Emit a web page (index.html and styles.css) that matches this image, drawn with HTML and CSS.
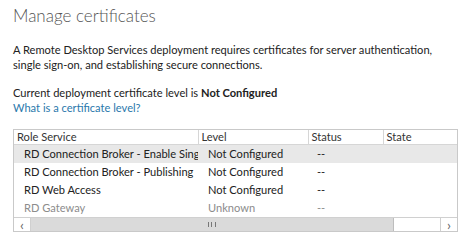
FILE: index.html
```html
<!DOCTYPE html>
<html lang="en">
<head>
    <meta charset="UTF-8">
    <title>Manage certificates</title>
    <link rel="stylesheet" href="styles.css">
</head>
<body>
    <div class="page">
        <h1>Manage certificates</h1>
        <p class="intro">A Remote Desktop Services deployment requires certificates for server authentication,<br>
            single sign-on, and establishing secure connections.</p>
        <p class="level">Current deployment certificate level is <b>Not Configured</b><br>
            <a href="#">What is a certificate level?</a></p>

        <div class="grid">
            <table>
                <colgroup>
                    <col class="c-role">
                    <col class="c-level">
                    <col class="c-status">
                    <col>
                </colgroup>
                <thead>
                    <tr>
                        <th>Role Service</th>
                        <th>Level</th>
                        <th>Status</th>
                        <th>State</th>
                    </tr>
                </thead>
                <tbody>
                    <tr class="selected">
                        <td class="role">RD Connection Broker - Enable Single Sign On</td>
                        <td>Not Configured</td>
                        <td class="dash">--</td>
                        <td></td>
                    </tr>
                    <tr>
                        <td class="role">RD Connection Broker - Publishing</td>
                        <td>Not Configured</td>
                        <td class="dash">--</td>
                        <td></td>
                    </tr>
                    <tr>
                        <td class="role">RD Web Access</td>
                        <td>Not Configured</td>
                        <td class="dash">--</td>
                        <td></td>
                    </tr>
                    <tr class="disabled">
                        <td class="role">RD Gateway</td>
                        <td>Unknown</td>
                        <td class="dash">--</td>
                        <td></td>
                    </tr>
                </tbody>
            </table>
            <div class="hscroll">
                <span class="arrow">&lsaquo;</span>
                <span class="thumb"><span class="grip"></span></span>
                <span class="track"></span>
                <span class="arrow">&rsaquo;</span>
            </div>
        </div>
    </div>
</body>
</html>
```

FILE: styles.css
```css
body {
    margin: 0;
    background-color: #fff;
    font-family: Lato, "Open Sans", sans-serif;
    font-size: 11.1px;
    color: #222;
}
.page {
    padding: 3px 16px 0 13px;
}
h1 {
    margin: 0;
    font-size: 17px;
    font-weight: 300;
    color: #555;
    line-height: 26px;
}
.intro {
    margin: 13px 0 0;
    line-height: 15px;
    white-space: nowrap;
}
.level {
    margin: 13px 0 0;
    line-height: 15px;
}
.level b {
    font-weight: 700;
}
.level a {
    color: #2a78ac;
    text-decoration: none;
}
.grid {
    margin-top: 14px;
    width: 445px;
    border: 1px solid #c9c9c9;
    box-sizing: border-box;
}
table {
    width: 100%;
    border-collapse: collapse;
    table-layout: fixed;
}
.c-role { width: 184px; }
.c-level { width: 110px; }
.c-status { width: 75px; }
th {
    text-align: left;
    font-weight: 400;
    color: #333;
    height: 14px;
    line-height: 14px;
    padding: 0 3px;
    border-right: 1px solid #d6d6d6;
    border-bottom: 1px solid #d6d6d6;
    white-space: nowrap;
    overflow: hidden;
}
th:last-child {
    border-right: none;
}
td {
    height: 18px;
    line-height: 18px;
    padding: 0 0 0 10px;
    white-space: nowrap;
    overflow: hidden;
    text-overflow: clip;
}
td.dash {
    padding-left: 9px;
}
tr.selected td {
    background-color: #e8e8e8;
}
tr.disabled td {
    color: #8c8c8c;
}
.hscroll {
    display: flex;
    height: 13px;
    margin-top: 0;
    border-top: 1px solid #d0d0d0;
}
.arrow {
    width: 16px;
    display: flex;
    align-items: center;
    justify-content: center;
    font-size: 14px;
    line-height: 13px;
    color: #666;
    border: 1px solid #d0d0d0;
    border-top: none;
    border-bottom: none;
}
.arrow:first-child {
    border-left: none;
}
.arrow:last-child {
    border-right: none;
}
.thumb {
    width: 362px;
    background-color: #dadada;
    border-right: 1px solid #bdbdbd;
    display: flex;
    align-items: center;
    justify-content: center;
}
.grip {
    width: 6px;
    height: 5px;
    border-left: 1px solid #777;
    border-right: 1px solid #777;
    position: relative;
}
.grip::after {
    content: "";
    position: absolute;
    left: 2px;
    top: 0;
    width: 1px;
    height: 5px;
    background-color: #777;
}
.track {
    flex: 1;
}
```
